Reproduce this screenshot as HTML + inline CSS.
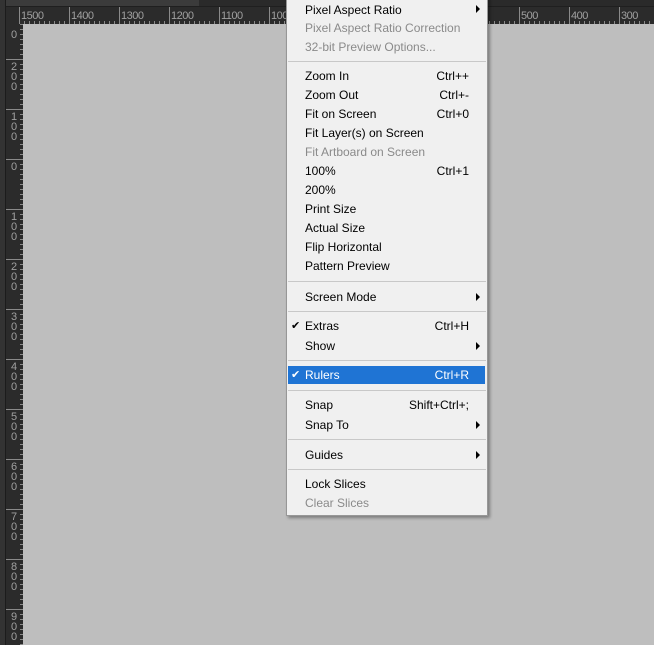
<!DOCTYPE html>
<html><head><style>
body{margin:0;width:654px;height:645px;overflow:hidden;background:#bebebe;position:relative;font-family:"Liberation Sans",sans-serif}
.abs{position:absolute}
#menu{position:absolute;left:286px;top:-4px;width:200px;height:518px;background:#f0f0f0;border:1px solid #979797;box-shadow:2px 2px 3px rgba(0,0,0,.35)}
.it{position:absolute;left:18px;font-size:12px;color:#000;white-space:nowrap;line-height:14px}
.dis{color:#8a8a8a}
.sc{position:absolute;right:18px;font-size:12px;line-height:14px;color:#000}
.sep{position:absolute;left:1px;right:1px;height:1px;background:#c8c8c8}
.arr{position:absolute;right:7px;width:0;height:0;border-left:4px solid #000;border-top:4px solid transparent;border-bottom:4px solid transparent}
.chk{position:absolute;left:4px;font-size:11px;line-height:14px}
.tk{position:absolute;background:#8a8a8a}
.lb{position:absolute;color:#a0a0a0;font-size:11px;line-height:10px;letter-spacing:-0.5px}
</style></head><body>
<div class="abs" style="left:0;top:0;width:654px;height:6px;background:#2a2a2a"></div>
<div class="abs" style="left:6px;top:0;width:193px;height:6px;background:#3b3b3b"></div>
<div class="abs" style="left:0;top:6px;width:654px;height:18px;background:#2b2b2b"></div>
<div class="abs" style="left:0;top:0;width:5px;height:645px;background:#333"></div>
<div class="abs" style="left:5px;top:0;width:1px;height:645px;background:#1c1c1c"></div>
<div class="abs" style="left:6px;top:6px;width:17px;height:639px;background:#2b2b2b"></div>
<div class="abs" style="left:6px;top:6px;width:648px;height:1px;background:#1f1f1f"></div>
<div id="rul"></div>
<div id="menu">
<div class="it" style="top:6px">Pixel Aspect Ratio</div><div class="arr" style="top:8px"></div>
<div class="it dis" style="top:24px">Pixel Aspect Ratio Correction</div>
<div class="it dis" style="top:43px">32-bit Preview Options...</div>
<div class="sep" style="top:64px"></div>
<div class="it" style="top:72px">Zoom In</div><div class="sc" style="top:72px">Ctrl++</div>
<div class="it" style="top:91px">Zoom Out</div><div class="sc" style="top:91px">Ctrl+-</div>
<div class="it" style="top:110px">Fit on Screen</div><div class="sc" style="top:110px">Ctrl+0</div>
<div class="it" style="top:129px">Fit Layer(s) on Screen</div>
<div class="it dis" style="top:148px">Fit Artboard on Screen</div>
<div class="it" style="top:167px">100%</div><div class="sc" style="top:167px">Ctrl+1</div>
<div class="it" style="top:186px">200%</div>
<div class="it" style="top:205px">Print Size</div>
<div class="it" style="top:224px">Actual Size</div>
<div class="it" style="top:243px">Flip Horizontal</div>
<div class="it" style="top:262px">Pattern Preview</div>
<div class="sep" style="top:284px"></div>
<div class="it" style="top:293px">Screen Mode</div><div class="arr" style="top:296px"></div>
<div class="sep" style="top:314px"></div>
<div class="chk" style="top:322px">✔</div>
<div class="it" style="top:322px">Extras</div><div class="sc" style="top:322px">Ctrl+H</div>
<div class="it" style="top:342px">Show</div><div class="arr" style="top:345px"></div>
<div class="sep" style="top:363px"></div>
<div class="abs" style="left:1px;top:369px;width:197px;height:18px;background:#1f74d4"></div>
<div class="chk" style="top:371px;color:#fff">✔</div>
<div class="it" style="top:371px;color:#fff">Rulers</div><div class="sc" style="top:371px;color:#fff">Ctrl+R</div>
<div class="sep" style="top:393px"></div>
<div class="it" style="top:401px">Snap</div><div class="sc" style="top:401px">Shift+Ctrl+;</div>
<div class="it" style="top:421px">Snap To</div><div class="arr" style="top:424px"></div>
<div class="sep" style="top:442px"></div>
<div class="it" style="top:451px">Guides</div><div class="arr" style="top:454px"></div>
<div class="sep" style="top:472px"></div>
<div class="it" style="top:480px">Lock Slices</div>
<div class="it dis" style="top:499px">Clear Slices</div>
</div>
<script>
var r=document.getElementById('rul'),h='';
for(var x=19;x<654;x+=5){var k=(x-19)%50==0;h+='<div class="tk" style="left:'+x+'px;top:'+(k?7:21)+'px;width:1px;height:'+(k?17:3)+'px"></div>';
if(k){var v=1500-(x-19)*2;if(v>=0)h+='<div class="lb" style="left:'+(x+2)+'px;top:11px">'+v+'</div>';}}
var ys=[[9,'0'],[59,'200'],[109,'100'],[159,'0'],[209,'100'],[259,'200'],[309,'300'],[359,'400'],[409,'500'],[459,'600'],[509,'700'],[559,'800'],[609,'900']];
for(var y=24;y<645;y+=5){h+='<div class="tk" style="left:20px;top:'+y+'px;width:3px;height:1px"></div>';}
ys.forEach(function(a){if(a[0]>20)h+='<div class="tk" style="left:6px;top:'+a[0]+'px;width:17px;height:1px"></div>';
var s=a[1].split('');s.forEach(function(c,i){h+='<div class="lb" style="left:11px;top:'+(a[0]+3+i*10+(a[0]<20?18:0))+'px">'+c+'</div>';});});
r.innerHTML=h;
</script>
</body></html>
